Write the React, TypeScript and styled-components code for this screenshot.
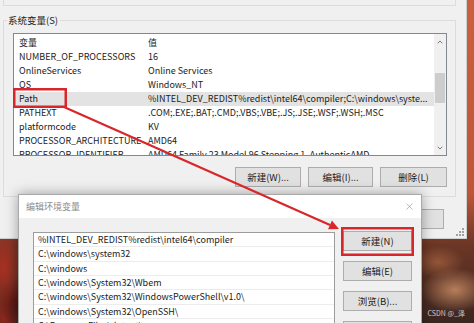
import styled, { createGlobalStyle } from "styled-components";
import { ChevronUp, ChevronDown, X } from "lucide-react";

const GlobalStyle = createGlobalStyle`
  html, body { margin: 0; padding: 0; }
  body {
    background: #2e1c18;
    font-family: "Noto Sans CJK SC", "Noto Sans", sans-serif;
    font-size: 9px;
    color: #1b1b1b;
  }
  * { box-sizing: border-box; }
`;

const Desktop = styled.div`
  position: relative;
  width: 474px;
  height: 323px;
  overflow: hidden;
  background:
    radial-gradient(ellipse 34px 22px at 455px 290px, rgba(200, 140, 100, 0.85), transparent),
    radial-gradient(ellipse 26px 16px at 438px 262px, rgba(160, 95, 60, 0.8), transparent),
    radial-gradient(ellipse 22px 50px at 4px 268px, rgba(175, 48, 34, 0.95), transparent),
    radial-gradient(ellipse 16px 24px at 14px 300px, rgba(70, 16, 12, 0.9), transparent),
    radial-gradient(ellipse 20px 30px at 4px 318px, rgba(150, 40, 30, 0.9), transparent),
    linear-gradient(180deg, #c9613e 0%, #bd5638 60%, #6b3626 76%, #3b2620 100%);
`;

/* ---------- back window: 环境变量 ---------- */

const BackWindow = styled.div`
  position: absolute;
  left: 0;
  top: 0;
  width: 467px;
  height: 239px;
  background: #f0f0f0;
  border-right: 1px solid #cfcfcf;
  border-bottom: 1px solid #cfcfcf;
  display: flex;
  flex-direction: column;
`;

const UpperGroupEdge = styled.div`
  flex-shrink: 0;
  height: 6px;
  margin: 0 10px 0 3px;
  border: 1px solid #dcdcdc;
  border-top: none;
`;

const Group = styled.fieldset`
  flex-shrink: 0;
  margin: 7px 10px 0 3px;
  padding: 6px 8px 9px 9px;
  border: 1px solid #dcdcdc;
  min-width: 0;
`;

const Legend = styled.legend`
  margin-left: -6px;
  padding: 0 2px 0 1px;
  line-height: 14px;
  font-size: 9.5px;
`;

const ListBox = styled.div`
  display: flex;
  height: 123px;
  border: 1px solid #828790;
  background: #fff;
`;

const ListBody = styled.div`
  flex: 1;
  overflow: hidden;
`;

const VarRow = styled.div<{ $head?: boolean; $selected?: boolean }>`
  display: grid;
  grid-template-columns: 129px 1fr;
  height: ${(p) => (p.$head ? 16 : 14)}px;
  padding-top: ${(p) => (p.$head ? 2 : 0)}px;
  line-height: 14px;
  background: ${(p) => (p.$selected ? "#e3e3e3" : "transparent")};
`;

const Cell = styled.span`
  padding-left: 5px;
  white-space: nowrap;
  overflow: hidden;
`;

const ScrollBar = styled.div`
  width: 12px;
  background: #f0f0f0;
  display: flex;
  flex-direction: column;
  align-items: center;
  color: #606060;
`;

const ScrollArrow = styled.div`
  height: 15px;
  display: flex;
  align-items: center;
  justify-content: center;
`;

const ScrollTrack = styled.div`
  flex: 1;
  width: 100%;
  padding: 24px 1px 0;
`;

const Thumb = styled.div`
  height: 30px;
  background: #cdcdcd;
`;

const ButtonRow = styled.div`
  display: flex;
  justify-content: flex-end;
  gap: 7px;
  margin-top: 11px;
`;

const Button = styled.button<{ $w?: number }>`
  flex-shrink: 0;
  width: ${(p) => p.$w ?? 66}px;
  height: 20px;
  padding: 0;
  background: #e1e1e1;
  border: 1px solid #adadad;
  font: inherit;
  font-size: 9.5px;
  color: #1b1b1b;
`;

const Footer = styled.div`
  display: flex;
  justify-content: flex-end;
  gap: 7px;
  margin-top: 12px;
  padding-right: 22px;
`;

const Grip = styled.div`
  position: absolute;
  right: 2px;
  bottom: 2px;
  width: 8px;
  height: 8px;
  background:
    radial-gradient(circle at 7px 1px, #a0a0a0 0.8px, transparent 1px),
    radial-gradient(circle at 4px 4px, #a0a0a0 0.8px, transparent 1px),
    radial-gradient(circle at 7px 4px, #a0a0a0 0.8px, transparent 1px),
    radial-gradient(circle at 1px 7px, #a0a0a0 0.8px, transparent 1px),
    radial-gradient(circle at 4px 7px, #a0a0a0 0.8px, transparent 1px),
    radial-gradient(circle at 7px 7px, #a0a0a0 0.8px, transparent 1px);
`;

/* ---------- front dialog: 编辑环境变量 ---------- */

const EditDialog = styled.div`
  position: absolute;
  left: 18px;
  top: 194px;
  width: 404px;
  background: #f0f0f0;
  border: 1px solid #a9a9a9;
  box-shadow: 0 0 12px rgba(0, 0, 0, 0.35);
  display: flex;
  flex-direction: column;
`;

const TitleBar = styled.div`
  flex-shrink: 0;
  height: 23px;
  background: #fff;
  display: flex;
  align-items: center;
  justify-content: space-between;
  padding: 0 6px 0 7px;
  color: #8c8c8c;
`;

const DialogBody = styled.div`
  display: flex;
  gap: 8px;
  padding: 14px 9px 20px 14px;
`;

const PathList = styled.div`
  width: 302px;
  height: 120px;
  border: 1px solid #9c9c9c;
  background: #fff;
  overflow: hidden;
`;

const PathRow = styled.div`
  height: 14.33px;
  line-height: 13.5px;
  padding-left: 4px;
  border-bottom: 1px solid #ececec;
  white-space: nowrap;
  overflow: hidden;
`;

const ButtonColumn = styled.div`
  display: flex;
  flex-direction: column;
  gap: 10px;
  margin-top: -1px;
`;

const Annotations = styled.svg`
  position: absolute;
  left: 0;
  top: 0;
  pointer-events: none;
`;

const Watermark = styled.span`
  position: absolute;
  right: 9px;
  bottom: 5px;
  font-size: 7px;
  color: rgba(255, 255, 255, 0.75);
`;

const systemVars: [string, string][] = [
  ["NUMBER_OF_PROCESSORS", "16"],
  ["OnlineServices", "Online Services"],
  ["OS", "Windows_NT"],
  ["Path", "%INTEL_DEV_REDIST%redist\\intel64\\compiler;C:\\windows\\syste..."],
  ["PATHEXT", ".COM;.EXE;.BAT;.CMD;.VBS;.VBE;.JS;.JSE;.WSF;.WSH;.MSC"],
  ["platformcode", "KV"],
  ["PROCESSOR_ARCHITECTURE", "AMD64"],
  ["PROCESSOR_IDENTIFIER", "AMD64 Family 23 Model 96 Stepping 1, AuthenticAMD"],
];

const pathEntries = [
  "%INTEL_DEV_REDIST%redist\\intel64\\compiler",
  "C:\\windows\\system32",
  "C:\\windows",
  "C:\\windows\\System32\\Wbem",
  "C:\\windows\\System32\\WindowsPowerShell\\v1.0\\",
  "C:\\windows\\System32\\OpenSSH\\",
  "C:\\Program Files\\dotnet\\",
  "C:\\Program Files\\Git\\cmd",
];

export default function App() {
  return (
    <Desktop>
      <GlobalStyle />
      <BackWindow>
        <UpperGroupEdge />
        <Group>
          <Legend>系统变量(S)</Legend>
          <ListBox>
            <ListBody>
              <VarRow $head>
                <Cell>变量</Cell>
                <Cell>值</Cell>
              </VarRow>
              {systemVars.map(([name, value]) => (
                <VarRow key={name} $selected={name === "Path"}>
                  <Cell>{name}</Cell>
                  <Cell>{value}</Cell>
                </VarRow>
              ))}
            </ListBody>
            <ScrollBar>
              <ScrollArrow>
                <ChevronUp size={8} strokeWidth={2.5} />
              </ScrollArrow>
              <ScrollTrack>
                <Thumb />
              </ScrollTrack>
              <ScrollArrow>
                <ChevronDown size={8} strokeWidth={2.5} />
              </ScrollArrow>
            </ScrollBar>
          </ListBox>
          <ButtonRow>
            <Button>新建(W)...</Button>
            <Button $w={65}>编辑(I)...</Button>
            <Button $w={67}>删除(L)</Button>
          </ButtonRow>
        </Group>
        <Footer>
          <Button>确定</Button>
          <Button>取消</Button>
        </Footer>
        <Grip />
      </BackWindow>

      <EditDialog>
        <TitleBar>
          <span>编辑环境变量</span>
          <X size={11} strokeWidth={1.1} color="#7a7a7a" />
        </TitleBar>
        <DialogBody>
          <PathList>
            {pathEntries.map((p) => (
              <PathRow key={p}>{p}</PathRow>
            ))}
          </PathList>
          <ButtonColumn>
            <Button $w={69}>新建(N)</Button>
            <Button $w={69}>编辑(E)</Button>
            <Button $w={69}>浏览(B)...</Button>
            <Button $w={69}>删除(D)</Button>
          </ButtonColumn>
        </DialogBody>
      </EditDialog>

      <Annotations width="474" height="323" viewBox="0 0 474 323">
        <rect x="14.25" y="89.25" width="51.5" height="17.5" fill="none" stroke="#d8262a" strokeWidth="2.5" />
        <rect x="342.25" y="228.25" width="70.5" height="26.5" fill="none" stroke="#d8262a" strokeWidth="2.5" />
        <line x1="64" y1="107" x2="330" y2="225" stroke="#d8262a" strokeWidth="2.2" />
        <polygon points="339,229 328.1,229.2 331.9,220.6" fill="#d8262a" />
      </Annotations>

      <Watermark>CSDN @_泽</Watermark>
    </Desktop>
  );
}
